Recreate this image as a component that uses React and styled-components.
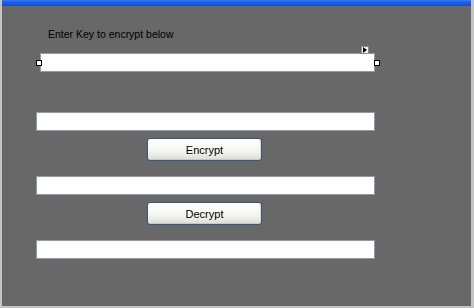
import React from 'react';
import styled, { createGlobalStyle } from 'styled-components';

const colors = {
    form: '#686868',
    frame: '#c4c4c4',
    xpBlue: '#1c5fe6',
    fieldBorder: '#8a9bb4',
    white: '#ffffff',
};

const GlobalStyle = createGlobalStyle`
    html, body {
        margin: 0;
        padding: 0;
        background: ${colors.form};
    }
`;

const App = () => (
    <>
        <GlobalStyle />
        <Frame>
            <TitleStrip />
            <Body>
                <KeyLabel>Enter Key to encrypt below</KeyLabel>
                <SelectedField>
                    <TextBox $inset={4} />
                    <SmartTag>
                        <svg width="4" height="6" viewBox="0 0 4 6">
                            <path d="M0 0 L4 3 L0 6 Z" fill="#000" />
                        </svg>
                    </SmartTag>
                    <Handle $side="left" />
                    <Handle $side="right" />
                </SelectedField>
                <TextBox $top={40} />
                <ButtonRow $top={7}>
                    <XpButton>Encrypt</XpButton>
                </ButtonRow>
                <TextBox $top={15} />
                <ButtonRow $top={7}>
                    <XpButton>Decrypt</XpButton>
                </ButtonRow>
                <TextBox $top={15} />
            </Body>
        </Frame>
    </>
);

const Frame = styled.div`
    width: 474px;
    height: 308px;
    box-sizing: border-box;
    display: flex;
    flex-direction: column;
    background: ${colors.form};
    border-left: 2px solid ${colors.frame};
    border-right: 3px solid ${colors.frame};
    border-bottom: 2px solid ${colors.frame};
    font-family: "Liberation Sans", Arial, sans-serif;
    overflow: hidden;
`;

const TitleStrip = styled.div`
    height: 6px;
    margin: 0 -3px 0 -2px;
    background: linear-gradient(to bottom, #3a7af0 0%, ${colors.xpBlue} 40%, #0f4fd8 100%);
`;

const Body = styled.div`
    display: flex;
    flex-direction: column;
    padding: 0 96px 0 34px;
`;

const KeyLabel = styled.div`
    margin: 21px 0 0 12px;
    font-size: 10.5px;
    line-height: 14px;
    color: #000;
`;

const SelectedField = styled.div`
    position: relative;
    margin-top: 8px;
    padding-top: 4px;
`;

const TextBox = styled.div`
    height: 19px;
    box-sizing: border-box;
    margin-top: ${({ $top }) => $top || 0}px;
    margin-left: ${({ $inset }) => $inset || 0}px;
    background: ${colors.white};
    border: 1px solid ${colors.fieldBorder};
`;

const SmartTag = styled.div`
    position: absolute;
    top: -3px;
    right: 6px;
    width: 8px;
    height: 8px;
    box-sizing: border-box;
    display: flex;
    align-items: center;
    justify-content: center;
    background: #f4f4f4;
    border: 1px solid #8c8c8c;
`;

const Handle = styled.div`
    position: absolute;
    top: 11px;
    ${({ $side }) => ($side === 'left' ? 'left: 0px;' : 'right: -5px;')}
    width: 6px;
    height: 6px;
    box-sizing: border-box;
    background: ${colors.white};
    border: 1px solid #000;
`;

const ButtonRow = styled.div`
    display: flex;
    margin-top: ${({ $top }) => $top}px;
    padding-left: 111px;
`;

const XpButton = styled.button`
    width: 115px;
    height: 23px;
    padding: 0;
    font-family: inherit;
    font-size: 11px;
    color: #000;
    border: 1px solid #3a587e;
    border-radius: 3px;
    background: linear-gradient(to bottom, #ffffff 0%, #f4f4f0 60%, #dcdcd6 100%);
    box-shadow: inset 0 -1px 0 #c8c8c0, inset -1px 0 0 #d8d8d2;
`;

export default App;
